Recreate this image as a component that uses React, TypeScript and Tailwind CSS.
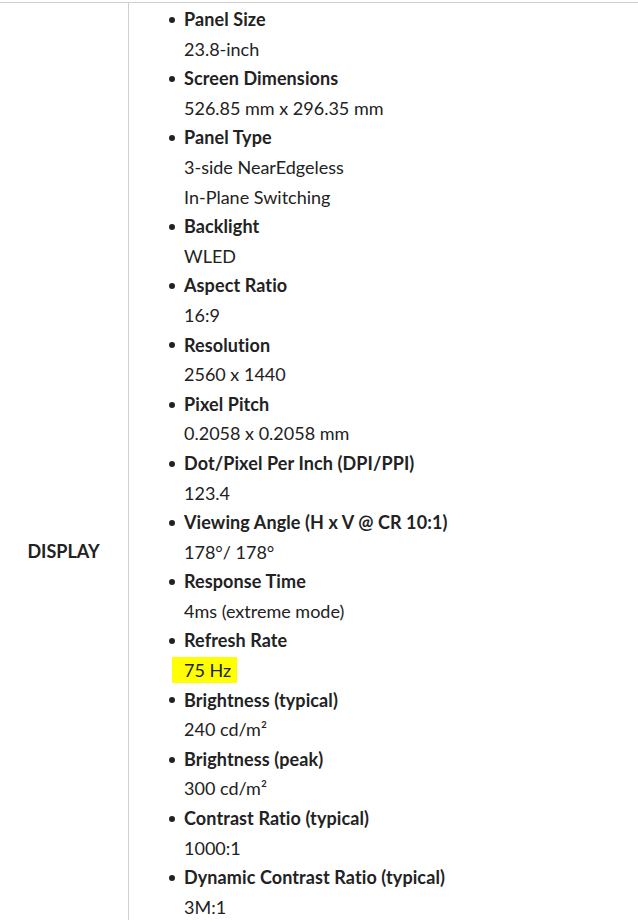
import React from "react";

const items: [string, string[]][] = [
  ["Panel Size", ["23.8-inch"]],
  ["Screen Dimensions", ["526.85 mm x 296.35 mm"]],
  ["Panel Type", ["3-side NearEdgeless", "In-Plane Switching"]],
  ["Backlight", ["WLED"]],
  ["Aspect Ratio", ["16:9"]],
  ["Resolution", ["2560 x 1440"]],
  ["Pixel Pitch", ["0.2058 x 0.2058 mm"]],
  ["Dot/Pixel Per Inch (DPI/PPI)", ["123.4"]],
  ["Viewing Angle (H x V @ CR 10:1)", ["178°/ 178°"]],
  ["Response Time", ["4ms (extreme mode)"]],
  ["Refresh Rate", ["75 Hz"]],
  ["Brightness (typical)", ["240 cd/m²"]],
  ["Brightness (peak)", ["300 cd/m²"]],
  ["Contrast Ratio (typical)", ["1000:1"]],
  ["Dynamic Contrast Ratio (typical)", ["3M:1"]],
];

export default function App() {
  return (
    <div
      className="w-[638px] h-[920px] overflow-hidden bg-white text-[#222]"
      style={{ fontFamily: "Lato, 'Open Sans', sans-serif" }}
    >
      <div className="mt-[2px] border-t border-[#d0d0d0] flex">
        <div className="w-[129px] shrink-0 border-r border-[#d0d0d0] flex items-center justify-center">
          <span className="font-bold text-[18px] pr-[1px]">DISPLAY</span>
        </div>
        <ul className="flex-1 pl-[55px] pt-[2px] pb-[178px] text-[18px] leading-[29.6px]">
          {items.map(([label, vals]) => (
            <li key={label}>
              <div className="flex items-center">
                <span className="w-[6px] h-[6px] rounded-full bg-[#222] mr-[9px] -ml-[15px]" />
                <span className="font-bold tracking-[0.1px]">{label}</span>
              </div>
              {vals.map((v) =>
                v === "75 Hz" ? (
                  <div key={v}>
                    <span className="bg-[#ffff00] pl-[12px] pr-[6px] -ml-[12px] py-[2px]">{v}</span>
                  </div>
                ) : (
                  <div key={v}>{v}</div>
                )
              )}
            </li>
          ))}
        </ul>
      </div>
    </div>
  );
}
